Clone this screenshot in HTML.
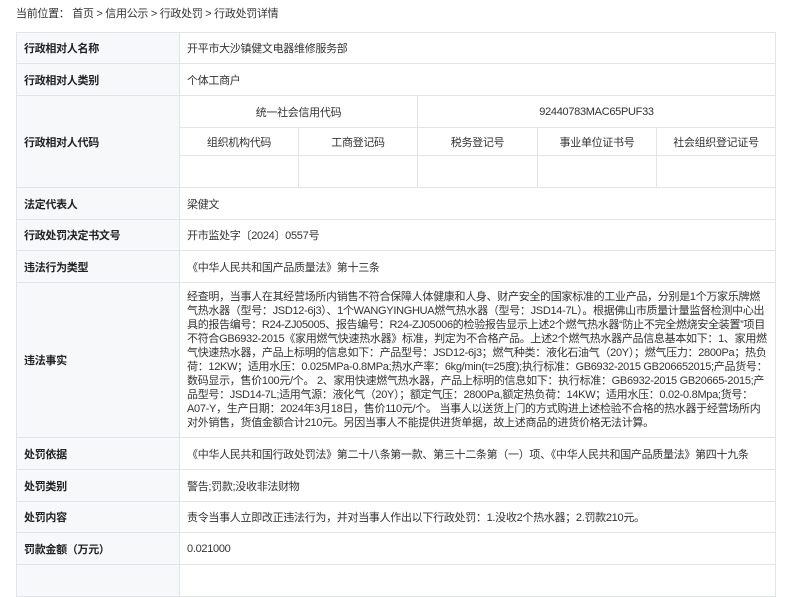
<!DOCTYPE html><html><head><meta charset="utf-8"><style>
html,body{margin:0;width:794px;height:570px;overflow:hidden;background:#fff;font-family:"Liberation Sans","Noto Sans CJK SC",sans-serif;font-size:11px;letter-spacing:-0.3px;color:#333}
.c{position:absolute;box-sizing:border-box;border:1px solid #e1e4e8;display:flex;align-items:center;padding-left:7px}
.l{background:#f7f8fa;font-weight:bold;color:#222}
.m{justify-content:center;padding-left:0}
.bc{position:absolute;left:16px;top:5px;color:#333}
</style></head><body>
<div class="bc">当前位置： 首页 &gt; 信用公示 &gt; 行政处罚 &gt; 行政处罚详情</div>
<div class="c l" style="left:16px;top:32px;width:164px;height:32px">行政相对人名称</div>
<div class="c" style="left:179px;top:32px;width:597px;height:32px">开平市大沙镇健文电器维修服务部</div>
<div class="c l" style="left:16px;top:63px;width:164px;height:33px">行政相对人类别</div>
<div class="c" style="left:179px;top:63px;width:597px;height:33px">个体工商户</div>
<div class="c l" style="left:16px;top:95px;width:164px;height:93px">行政相对人代码</div>
<div class="c m" style="left:179px;top:95px;width:239px;height:33px">统一社会信用代码</div>
<div class="c m" style="left:417px;top:95px;width:359px;height:33px">92440783MAC65PUF33</div>
<div class="c m" style="left:179px;top:127px;width:120px;height:29px">组织机构代码</div>
<div class="c m" style="left:298px;top:127px;width:120px;height:29px">工商登记码</div>
<div class="c m" style="left:417px;top:127px;width:121px;height:29px">税务登记号</div>
<div class="c m" style="left:537px;top:127px;width:120px;height:29px">事业单位证书号</div>
<div class="c m" style="left:656px;top:127px;width:120px;height:29px">社会组织登记证号</div>
<div class="c" style="left:179px;top:155px;width:120px;height:33px"></div>
<div class="c" style="left:298px;top:155px;width:120px;height:33px"></div>
<div class="c" style="left:417px;top:155px;width:121px;height:33px"></div>
<div class="c" style="left:537px;top:155px;width:120px;height:33px"></div>
<div class="c" style="left:656px;top:155px;width:120px;height:33px"></div>
<div class="c l" style="left:16px;top:187px;width:164px;height:33px">法定代表人</div>
<div class="c" style="left:179px;top:187px;width:597px;height:33px">梁健文</div>
<div class="c l" style="left:16px;top:219px;width:164px;height:32px">行政处罚决定书文号</div>
<div class="c" style="left:179px;top:219px;width:597px;height:32px">开市监处字〔2024〕0557号</div>
<div class="c l" style="left:16px;top:250px;width:164px;height:33px">违法行为类型</div>
<div class="c" style="left:179px;top:250px;width:597px;height:33px">《中华人民共和国产品质量法》第十三条</div>
<div class="c l" style="left:16px;top:282px;width:164px;height:156px">违法事实</div>
<div class="c" style="left:179px;top:282px;width:597px;height:156px;line-height:14px;padding-right:6px">经查明，当事人在其经营场所内销售不符合保障人体健康和人身、财产安全的国家标准的工业产品，分别是1个万家乐牌燃气热水器（型号：JSD12-6j3）、1个WANGYINGHUA燃气热水器（型号：JSD14-7L）。根据佛山市质量计量监督检测中心出具的报告编号：R24-ZJ05005、报告编号：R24-ZJ05006的检验报告显示上述2个燃气热水器“防止不完全燃烧安全装置”项目不符合GB6932-2015《家用燃气快速热水器》标准，判定为不合格产品。上述2个燃气热水器产品信息基本如下：1、家用燃气快速热水器，产品上标明的信息如下：产品型号：JSD12-6j3；燃气种类：液化石油气（20Y）；燃气压力：2800Pa；热负荷：12KW；适用水压：0.025MPa-0.8MPa;热水产率：6kg/min(t=25度);执行标准：GB6932-2015 GB20665­2015;产品货号：数码显示，售价100元/个。 2、家用快速燃气热水器，产品上标明的信息如下：执行标准：GB6932-2015 GB20665-2015;产品型号：JSD14-7L;适用气源：液化气（20Y）；额定气压：2800Pa,额定热负荷：14KW；适用水压：0.02-0.8Mpa;货号：A07-Y，生产日期：2024年3月18日，售价110元/个。 当事人以送货上门的方式购进上述检验不合格的热水器于经营场所内对外销售，货值金额合计210元。另因当事人不能提供进货单据，故上述商品的进货价格无法计算。</div>
<div class="c l" style="left:16px;top:437px;width:164px;height:33px">处罚依据</div>
<div class="c" style="left:179px;top:437px;width:597px;height:33px;white-space:nowrap">《中华人民共和国行政处罚法》第二十八条第一款、第三十二条第（一）项、《中华人民共和国产品质量法》第四十九条</div>
<div class="c l" style="left:16px;top:469px;width:164px;height:33px">处罚类别</div>
<div class="c" style="left:179px;top:469px;width:597px;height:33px">警告;罚款;没收非法财物</div>
<div class="c l" style="left:16px;top:501px;width:164px;height:32px">处罚内容</div>
<div class="c" style="left:179px;top:501px;width:597px;height:32px">责令当事人立即改正违法行为，并对当事人作出以下行政处罚：1.没收2个热水器；2.罚款210元。</div>
<div class="c l" style="left:16px;top:532px;width:164px;height:33px">罚款金额（万元）</div>
<div class="c" style="left:179px;top:532px;width:597px;height:33px">0.021000</div>
<div class="c l" style="left:16px;top:564px;width:164px;height:33px"></div>
<div class="c" style="left:179px;top:564px;width:597px;height:33px"></div>
</body></html>
